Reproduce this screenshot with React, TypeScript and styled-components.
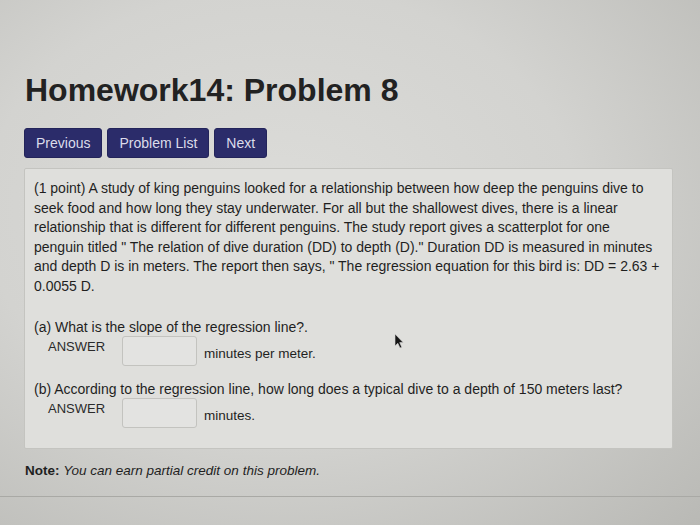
import styled, { createGlobalStyle } from "styled-components";

const GlobalStyle = createGlobalStyle`
  html, body {
    margin: 0;
    padding: 0;
  }
  body {
    width: 700px;
    height: 525px;
    overflow: hidden;
    font-family: "Liberation Sans", Arial, sans-serif;
    background: radial-gradient(ellipse at 40% 40%, #dcdcd9 0%, #d3d3d0 50%, #b9b9b5 100%);
  }
`;

const problemLines = [
  "(1 point) A study of king penguins looked for a relationship between how deep the penguins dive to",
  "seek food and how long they stay underwater. For all but the shallowest dives, there is a linear",
  "relationship that is different for different penguins. The study report gives a scatterplot for one",
  'penguin titled " The relation of dive duration (DD) to depth (D)." Duration DD is measured in minutes',
  'and depth D is in meters. The report then says, " The regression equation for this bird is: DD = 2.63 +',
  "0.0055 D.",
];

const questions = [
  { label: "(a) What is the slope of the regression line?.", unit: "minutes per meter." },
  {
    label: "(b) According to the regression line, how long does a typical dive to a depth of 150 meters last?",
    unit: "minutes.",
  },
];

function App() {
  return (
    <>
      <GlobalStyle />
      <Page>
        <Title>Homework14: Problem 8</Title>
        <Nav>
          <NavButton>Previous</NavButton>
          <NavButton>Problem List</NavButton>
          <NavButton>Next</NavButton>
        </Nav>
        <ProblemBox>
          <Paragraph>
            {problemLines.map((line) => (
              <Line key={line}>{line}</Line>
            ))}
          </Paragraph>
          {questions.map((q) => (
            <Question key={q.label}>
              <QuestionText>{q.label}</QuestionText>
              <AnswerRow>
                <AnswerLabel>ANSWER</AnswerLabel>
                <AnswerInput />
                <Unit>{q.unit}</Unit>
              </AnswerRow>
            </Question>
          ))}
          <Cursor viewBox="0 0 10 16">
            <path d="M1 1 L1 13 L3.8 10.3 L6 15 L7.8 14.2 L5.7 9.6 L9.2 9.6 Z" fill="#161616" stroke="#d8d8d8" strokeWidth="0.6" />
          </Cursor>
        </ProblemBox>
        <Note>
          <b>Note:</b> <i>You can earn partial credit on this problem.</i>
        </Note>
        <Rule />
      </Page>
    </>
  );
}

export default App;

const Page = styled.div`
  padding: 74px 0 0 25px;
  color: #1f1f1f;
`;

const Title = styled.h1`
  margin: 0 0 22px 0;
  font-size: 32px;
  line-height: 1;
  font-weight: 700;
  color: #222;
`;

const Nav = styled.div`
  display: flex;
  gap: 5px;
  margin-left: -1px;
  margin-bottom: 10px;
`;

const NavButton = styled.button`
  font-family: "Liberation Sans", Arial, sans-serif;
  font-size: 14px;
  color: #dcdcea;
  background: #2b2c6a;
  border: 1px solid #23245a;
  border-radius: 3px;
  padding: 0 11px;
  height: 30px;
`;

const ProblemBox = styled.div`
  position: relative;
  width: 628px;
  margin-left: -1px;
  padding: 10px 10px 20px 9px;
  background: #dfdfdc;
  border: 1px solid #c4c4c0;
  border-radius: 2px;
`;

const Paragraph = styled.div`
  margin: 0 0 21px 0;
  font-size: 14px;
  line-height: 19.6px;
  color: #1f1f1f;
`;

const Line = styled.div`
  white-space: nowrap;
`;

const Question = styled.div`
  & + & {
    margin-top: 14px;
  }
`;

const QuestionText = styled.div`
  font-size: 14px;
  line-height: 18px;
  color: #1f1f1f;
  white-space: nowrap;
`;

const AnswerRow = styled.div`
  display: flex;
  align-items: flex-start;
  padding-left: 14px;
`;

const AnswerLabel = styled.span`
  font-size: 13px;
  line-height: 16px;
  color: #2a2a2a;
  width: 74px;
  margin-top: 3px;
`;

const AnswerInput = styled.div`
  width: 73px;
  height: 28px;
  background: #e3e3e1;
  border: 1px solid #c3c3bf;
  border-radius: 3px;
`;

const Unit = styled.span`
  font-size: 13.5px;
  line-height: 16px;
  color: #1f1f1f;
  margin-left: 7px;
  margin-top: 10px;
`;

const Cursor = styled.svg`
  position: absolute;
  left: 369px;
  top: 164px;
  width: 10px;
  height: 16px;
`;

const Note = styled.div`
  margin-top: 14px;
  font-size: 13.5px;
  line-height: 16px;
  color: #1f1f1f;
`;

const Rule = styled.div`
  margin: 17px 0 0 -25px;
  width: 700px;
  border-top: 1px solid #a9a9a5;
`;
